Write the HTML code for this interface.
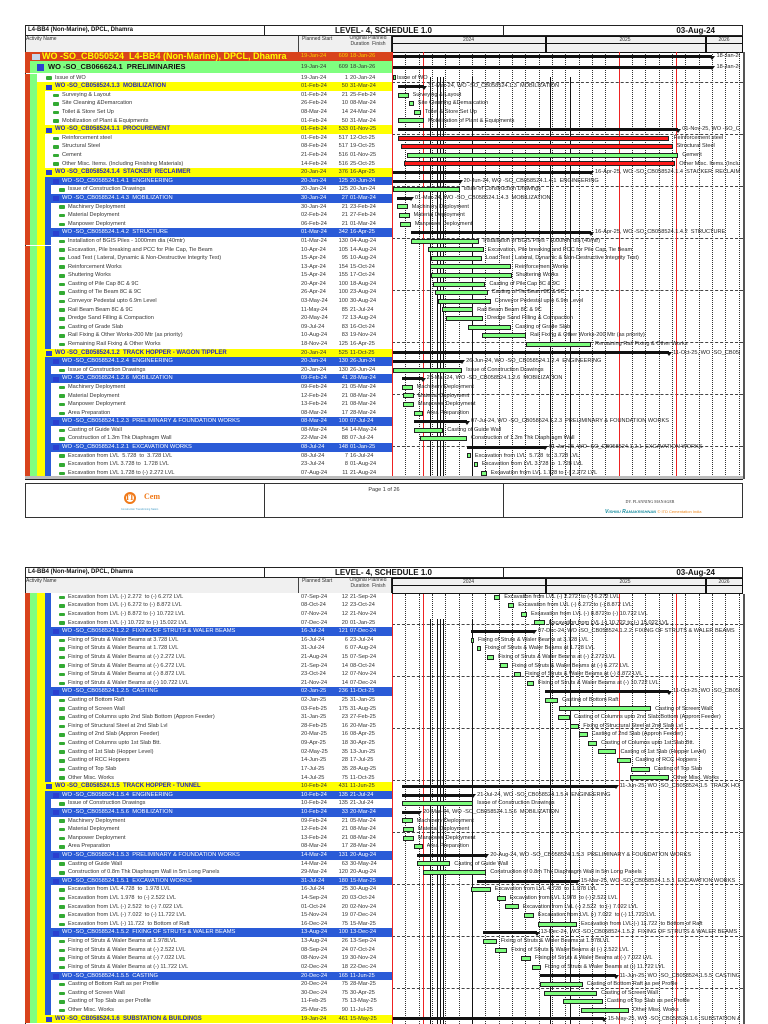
<!DOCTYPE html>
<html><head><meta charset="utf-8">
<style>
*{margin:0;padding:0;box-sizing:border-box}
body{width:768px;height:1024px;background:#fff;position:relative;overflow:hidden;font-family:"Liberation Sans",Arial,sans-serif;color:#333}
.a{position:absolute;white-space:nowrap}
</style></head><body>
<div id="root"></div>
<script>
const M={Jan:0,Feb:1,Mar:2,Apr:3,May:4,Jun:5,Jul:6,Aug:7,Sep:8,Oct:9,Nov:10,Dec:11};
function X(d){const p=d.split('-');const dt=Date.UTC(2000+ +p[2],M[p[1]],+p[0]);return 545+(dt-Date.UTC(2025,0,1))/864e5*0.4384;}
let H='';
function box(x,y,w,h,st,txt){H+=`<div class="a" style="left:${x}px;top:${y}px;width:${w}px;height:${h}px;${st||''}">${txt||''}</div>`;}
function header(top){
 box(25,top,718,11,'border:1px solid #222;border-bottom:1px solid #222');
 box(264,top,1,11,'background:#222');box(503,top,1,11,'background:#222');
 box(28,top+2,230,8,'font-size:6px;font-weight:bold;color:#111','L4-BB4 (Non-Marine), DPCL, Dhamra');
 box(264,top+1,239,10,'font-size:8px;font-weight:bold;color:#111;text-align:center','LEVEL- 4, SCHEDULE 1.0');
 box(650,top+1,90,10,'font-size:8px;font-weight:bold;color:#111;text-align:right;padding-right:25px','03-Aug-24');
 const h=top+11, hh=(top<100?17:16);
 box(25,h,367,hh,'background:#f0f0f0;border:1px solid #222;border-top:0');
 box(298,h,1,hh,'background:#444');
 box(26,h,100,6,'font-size:5px;line-height:6px;color:#333','Activity Name');
 box(302,h,40,6,'font-size:5px;line-height:6px','Planned Start');
 box(343,h,50,12,'font-size:5px;line-height:5.5px;text-align:center','Original Planned<br>Duration&nbsp; Finish');
 box(392,h,351,8,'background:#f0f0f0;border:1.5px solid #111');
 box(392,h+8,351,hh-8,'background:#f0f0f0;border:1.5px solid #111;border-top:0');
 box(545,h,1.5,hh,'background:#111');box(705,h,1.5,hh,'background:#111');
 box(392,h+1,153,6,'font-size:5px;line-height:6px;text-align:center','2024');
 box(545,h+1,160,6,'font-size:5px;line-height:6px;text-align:center','2025');
 box(705,h+1,38,6,'font-size:5px;line-height:6px;text-align:center','2026');
}
function grid(y0,y1){
 for(let i=1;i<29;i++){const x=392+i*13.33;if(x<743)box(x,y0,0,y1-y0,'border-left:1px dotted #333');}
 for(let y=y0+30;y<y1;y+=52)box(392,y,351,0,'border-top:1px dashed #444');
 [430,437,440,443,472,550,570].forEach(x=>box(x,y0+25,1.3,y1-y0-25,'background:#111'));
 [392,423,619,676].forEach(x=>box(x,y0,1.2,y1-y0,'background:#e22'));
 box(743,y0,1.5,y1-y0,'background:#555');
}
function page(rows,ys,parent){
 rows.forEach((r,i)=>{
  const [lv,name,s,d,f,c]=r;const y=ys[i].y,h=ys[i].h,cy=y+h/2;
  let x0,bg,st,tx;
  if(lv==='O'){x0=25;bg='#d8431c';st='font-size:9px;font-weight:bold;color:#ff0';tx=42;}
  else if(lv==='G'){x0=30;bg='#80ff80';st='font-size:7.5px;font-weight:bold;color:#111';tx=48;}
  else if(lv==='Y'){x0=37;bg='#ffff00';st='font-size:6px;font-weight:bold;color:#2323c8';tx=55;parent='Y';}
  else if(lv==='B'){x0=45;bg='#2a5bd7';st='font-size:5.8px;color:#fff';tx=62;parent='B';}
  else {x0=parent==='Y'?45:51;bg='#fff';st='font-size:5.6px;color:#333';tx=x0+17;
        if(lv==='g'){x0=37;tx=55;}}
  if(lv!=='O'){box(25,y,5,h,'background:#d8431c');}
  if(lv!=='O'&&lv!=='G'){box(30,y,7,h,'background:#80ff80');}
  if(lv==='B'||lv==='a'){box(37,y,8,h,'background:#ffff00');}
  if(lv==='a'&&parent==='B'){box(45,y,6,h,'background:#2a5bd7');}
  box(x0,y,392-x0,h,'background:'+bg);
  if(lv==='a'||lv==='g')box(tx-9,cy-1.5,6,3.5,'background:#3a3;border-radius:1px');
  else if(lv==='O')box(tx-10,cy-3,8,6,'background:#c9d6e8');
  else if(lv==='G')box(tx-11,cy-3,7,7,'background:#2a3fd0');
  else box(tx-9,cy-2,6,5,'background:#2a3fd0');
  const tc=(lv==='O')?'#f7d000':(lv==='B')?'#fff':'#333';
  box(tx,y,240,h,st+';line-height:'+h+'px',name);
  box(301,y,40,h,'font-size:5.6px;color:'+tc+';line-height:'+h+'px',s);
  box(330,y,18,h,'font-size:5.6px;text-align:right;color:'+tc+';line-height:'+h+'px',d);
  box(350,y,40,h,'font-size:5.6px;color:'+tc+';line-height:'+h+'px',f);
  const xs=Math.max(X(s),393),xe=Math.min(X(f),742);
  let lab;
  if(lv==='a'||lv==='g'){
   const col=c==='r'?'#ff1a1a':'#7dff7d';
   box(xs,cy-2.5,Math.max(xe-xs,3),5,'background:'+col+';border:1px solid #222');
   lab=name;
  } else {
   box(xs,cy-1.5,xe-xs,3,'background:#111');
   box(xe-3,cy-1,0,0,'border-left:3px solid transparent;border-right:3px solid transparent;border-top:4px solid #111');
   lab=(lv==='O'||lv==='G')?f+',':f+', '+name;
  }
  if(xe+4<742)box(xe+4,y,Math.max(0,740-xe-4),h,'overflow:hidden;font-size:5.6px;color:#222;line-height:'+h+'px',lab);
 });
}
</script>
<script>
const P1=[
['O','WO -SO_CB050524&nbsp; L4-BB4 (Non-Marine), DPCL, Dhamra','19-Jan-24','609','18-Jan-26'],
['G','WO -SO_CB066624.1&nbsp; PRELIMINARIES','19-Jan-24','609','18-Jan-26'],
['g','Issue of WO','19-Jan-24','1','20-Jan-24'],
['Y','WO -SO_CB058524.1.3&nbsp; MOBILIZATION','01-Feb-24','50','31-Mar-24'],
['a','Surveying &amp; Layout','01-Feb-24','21','25-Feb-24'],
['a','Site Cleaning &amp;Demarcation','26-Feb-24','10','08-Mar-24'],
['a','Toilet &amp; Store Set Up','08-Mar-24','14','24-Mar-24'],
['a','Mobilization of Plant &amp; Equipments','01-Feb-24','50','31-Mar-24'],
['Y','WO -SO_CB058524.1.1&nbsp; PROCUREMENT','01-Feb-24','533','01-Nov-25'],
['a','Reinforcement steel','01-Feb-24','517','12-Oct-25','r'],
['a','Structural Steel','08-Feb-24','517','19-Oct-25','r'],
['a','Cement','21-Feb-24','516','01-Nov-25'],
['a','Other Misc. Items. (Including Finishing Materials)','14-Feb-24','516','25-Oct-25','r'],
['Y','WO -SO_CB058524.1.4&nbsp; STACKER&nbsp; RECLAIMER','20-Jan-24','376','16-Apr-25'],
['B','WO -SO_CB058524.1.4.1&nbsp; ENGINEERING','20-Jan-24','125','20-Jun-24'],
['a','Issue of Construction Drawings','20-Jan-24','125','20-Jun-24'],
['B','WO -SO_CB058524.1.4.3&nbsp; MOBILIZATION','30-Jan-24','27','01-Mar-24'],
['a','Machinery Deployment','30-Jan-24','21','23-Feb-24'],
['a','Material Deployment','02-Feb-24','21','27-Feb-24'],
['a','Manpower Deployment','06-Feb-24','21','01-Mar-24'],
['B','WO -SO_CB058524.1.4.2&nbsp; STRUCTURE','01-Mar-24','342','16-Apr-25'],
['a','Installation of BGIS Piles - 1000mm dia (40mtr)','01-Mar-24','130','04-Aug-24'],
['a','Excavation, Pile breaking and PCC for Pile Cap, Tie Beam','10-Apr-24','105','14-Aug-24'],
['a','Load Test ( Lateral, Dynamic &amp; Non-Destructive Integrity Test)','15-Apr-24','95','10-Aug-24'],
['a','Reinforcement Works','13-Apr-24','154','15-Oct-24'],
['a','Shuttering Works','15-Apr-24','155','17-Oct-24'],
['a','Casting of Pile Cap 8C &amp; 9C','20-Apr-24','100','18-Aug-24'],
['a','Casting of Tie Beam 8C &amp; 9C','26-Apr-24','100','23-Aug-24'],
['a','Conveyor Pedestal upto 6.9m Level','03-May-24','100','30-Aug-24'],
['a','Rail Beam Beam 8C &amp; 9C','11-May-24','85','21-Jul-24'],
['a','Dredge Sand Filling &amp; Compaction','20-May-24','72','13-Aug-24'],
['a','Casting of Grade Slab','09-Jul-24','83','16-Oct-24'],
['a','Rail Fixing &amp; Other Works-200 Mtr (as priority)','10-Aug-24','83','19-Nov-24'],
['a','Remaining Rail Fixing &amp; Other Works','18-Nov-24','125','16-Apr-25'],
['Y','WO -SO_CB058524.1.2&nbsp; TRACK HOPPER - WAGON TIPPLER','20-Jan-24','525','11-Oct-25'],
['B','WO -SO_CB058524.1.2.4&nbsp; ENGINEERING','20-Jan-24','130','26-Jun-24'],
['a','Issue of Construction Drawings','20-Jan-24','130','26-Jun-24'],
['B','WO -SO_CB058524.1.2.6&nbsp; MOBILIZATION','09-Feb-24','41','28-Mar-24'],
['a','Machinery Deployment','09-Feb-24','21','05-Mar-24'],
['a','Material Deployment','12-Feb-24','21','08-Mar-24'],
['a','Manpower Deployment','13-Feb-24','21','08-Mar-24'],
['a','Area Preparation','08-Mar-24','17','28-Mar-24'],
['B','WO -SO_CB058524.1.2.3&nbsp; PRELIMINARY &amp; FOUNDATION WORKS','08-Mar-24','100','07-Jul-24'],
['a','Casting of Guide Wall','08-Mar-24','54','14-May-24'],
['a','Construction of 1.3m Thk Diaphragm Wall','22-Mar-24','88','07-Jul-24'],
['B','WO -SO_CB058524.1.2.1&nbsp; EXCAVATION WORKS','08-Jul-24','148','01-Jan-25'],
['a','Excavation from LVL&nbsp; 5.728&nbsp; to&nbsp; 3.728 LVL','08-Jul-24','7','16-Jul-24'],
['a','Excavation from LVL 3.728 to&nbsp; 1.728 LVL','23-Jul-24','8','01-Aug-24'],
['a','Excavation from LVL 1.728 to (-) 2.272 LVL','07-Aug-24','11','21-Aug-24']];
const P2=[
['a','Excavation from LVL (-) 2.272&nbsp; to (-) 6.272 LVL','07-Sep-24','12','21-Sep-24'],
['a','Excavation from LVL (-) 6.272 to (-) 8.872 LVL','08-Oct-24','12','23-Oct-24'],
['a','Excavation from LVL (-) 8.872 to (-) 10.722 LVL','07-Nov-24','12','21-Nov-24'],
['a','Excavation from LVL (-) 10.722 to (-) 15.022 LVL','07-Dec-24','20','01-Jan-25'],
['B','WO -SO_CB058524.1.2.2&nbsp; FIXING OF STRUTS &amp; WALER BEAMS','16-Jul-24','121','07-Dec-24'],
['a','Fixing of Struts &amp; Waler Beams at 3.728 LVL','16-Jul-24','6','23-Jul-24'],
['a','Fixing of Struts &amp; Waler Beams at 1.728 LVL','31-Jul-24','6','07-Aug-24'],
['a','Fixing of Struts &amp; Waler Beams at (-) 2.272 LVL','21-Aug-24','15','07-Sep-24'],
['a','Fixing of Struts &amp; Waler Beams at (-) 6.272 LVL','21-Sep-24','14','08-Oct-24'],
['a','Fixing of Struts &amp; Waler Beams at (-) 8.872 LVL','23-Oct-24','12','07-Nov-24'],
['a','Fixing of Struts &amp; Waler Beams at (-) 10.722 LVL','21-Nov-24','14','07-Dec-24'],
['B','WO -SO_CB058524.1.2.5&nbsp; CASTING','02-Jan-25','236','11-Oct-25'],
['a','Casting of Bottom Raft','02-Jan-25','25','31-Jan-25'],
['a','Casting of Screen Wall','03-Feb-25','175','31-Aug-25'],
['a','Casting of Columns upto 2nd Slab Bottom (Appron Feeder)','31-Jan-25','23','27-Feb-25'],
['a','Fixing of Structural Steel at 2nd Slab Lvl','28-Feb-25','16','20-Mar-25'],
['a','Casting of 2nd Slab (Appron Feeder)','20-Mar-25','16','08-Apr-25'],
['a','Casting of Columns upto 1st Slab Btt.','09-Apr-25','18','30-Apr-25'],
['a','Casting of 1st Slab (Hopper Level)','02-May-25','35','13-Jun-25'],
['a','Casting of RCC Hoppers','14-Jun-25','28','17-Jul-25'],
['a','Casting of Top Slab','17-Jul-25','35','28-Aug-25'],
['a','Other Misc. Works','14-Jul-25','75','11-Oct-25'],
['Y','WO -SO_CB058524.1.5&nbsp; TRACK HOPPER - TUNNEL','10-Feb-24','431','11-Jun-25'],
['B','WO -SO_CB058524.1.5.4&nbsp; ENGINEERING','10-Feb-24','135','21-Jul-24'],
['a','Issue of Construction Drawings','10-Feb-24','135','21-Jul-24'],
['B','WO -SO_CB058524.1.5.6&nbsp; MOBILIZATION','10-Feb-24','33','20-Mar-24'],
['a','Machinery Deployment','09-Feb-24','21','05-Mar-24'],
['a','Material Deployment','12-Feb-24','21','08-Mar-24'],
['a','Manpower Deployment','13-Feb-24','21','08-Mar-24'],
['a','Area Preparation','08-Mar-24','17','28-Mar-24'],
['B','WO -SO_CB058524.1.5.3&nbsp; PRELIMINARY &amp; FOUNDATION WORKS','14-Mar-24','131','20-Aug-24'],
['a','Casting of Guide Wall','14-Mar-24','63','30-May-24'],
['a','Construction of 0.8m Thk Diaphragm Wall in 5m Long Panels','29-Mar-24','120','20-Aug-24'],
['B','WO -SO_CB058524.1.5.1&nbsp; EXCAVATION WORKS','31-Jul-24','180','15-Mar-25'],
['a','Excavation from LVL 4.728&nbsp; to&nbsp; 1.978 LVL','16-Jul-24','25','30-Aug-24'],
['a','Excavation from LVL 1.978&nbsp; to (-) 2.522 LVL','14-Sep-24','20','03-Oct-24'],
['a','Excavation from LVL (-) 2.522&nbsp; to (-) 7.022 LVL','01-Oct-24','20','02-Nov-24'],
['a','Excavation from LVL (-) 7.022&nbsp; to (-) 11.722 LVL','15-Nov-24','19','07-Dec-24'],
['a','Excavation from LVL (-) 11.722&nbsp; to Bottom of Raft','16-Dec-24','75','15-Mar-25'],
['B','WO -SO_CB058524.1.5.2&nbsp; FIXING OF STRUTS &amp; WALER BEAMS','13-Aug-24','100','13-Dec-24'],
['a','Fixing of Struts &amp; Waler Beams at 1.978LVL','13-Aug-24','26','13-Sep-24'],
['a','Fixing of Struts &amp; Waler Beams at (-) 2.522 LVL','08-Sep-24','24','07-Oct-24'],
['a','Fixing of Struts &amp; Waler Beams at (-) 7.022 LVL','08-Nov-24','19','30-Nov-24'],
['a','Fixing of Struts &amp; Waler Beams at (-) 11.722 LVL','02-Dec-24','18','22-Dec-24'],
['B','WO -SO_CB058524.1.5.5&nbsp; CASTING','20-Dec-24','165','11-Jun-25'],
['a','Casting of Bottom Raft as per Profile','20-Dec-24','75','28-Mar-25'],
['a','Casting of Screen Wall','30-Dec-24','75','30-Apr-25'],
['a','Casting of Top Slab as per Profile','11-Feb-25','75','13-May-25'],
['a','Other Misc. Works','25-Mar-25','90','11-Jul-25'],
['Y','WO -SO_CB058524.1.6&nbsp; SUBSTATION &amp; BUILDINGS','19-Jan-24','461','15-May-25']];
header(25);
box(25,52,718,427,'border-left:1px solid #222');
grid(52,479);
const y1=[{y:52,h:9},{y:61,h:12}];
for(let i=2;i<P1.length;i++)y1.push({y:73.7+(i-2)*8.59,h:8.59});
page(P1,y1,'G');
box(25,476,718,3,'background:#bbb');
box(25,479,718,1,'background:#222');
box(25,483,718,35,'border:1px solid #333');
box(264,483,1,35,'background:#333');box(503,483,1,35,'background:#333');
box(265,487,238,8,'font-size:5.5px;text-align:center;color:#333','Page 1 of 26');
box(124,492,12,12,'border:2.5px solid #f07a1a;border-radius:50%');
box(126,493,8,10,'font-family:Liberation Serif,serif;font-size:8px;font-weight:bold;color:#f07a1a;text-align:center;line-height:10px','IT');
box(144,492,30,10,'font-family:Liberation Serif,serif;font-size:8px;font-weight:bold;color:#f07a1a;line-height:10px','Cem');
box(121,508,46,4,'font-size:2.5px;color:#4a9fc8;line-height:4px','Construction Transforming Nation');
box(600,499,100,6,'font-family:Liberation Serif,serif;font-size:4px;color:#333;text-align:center;line-height:6px','DY. PLANNING MANAGER');
box(605,508,130,7,'font-size:5px;line-height:7px;color:#1b8ea0;font-weight:bold;font-style:italic','V<span style="font-size:4px">ISHNU</span> R<span style="font-size:4px">AMAKRISHNAN</span> <span style="color:#f08a20;font-weight:normal;font-style:normal;font-size:4px">© ITD Cementation India</span>');
header(567);
box(25,594,718,430,'border-left:1px solid #222');
grid(594,1024);
const y2=[];
for(let i=0;i<P2.length;i++)y2.push({y:592.7+i*8.61,h:8.61});
page(P2,y2,'B');
document.getElementById('root').innerHTML=H;
</script>
</body></html>
